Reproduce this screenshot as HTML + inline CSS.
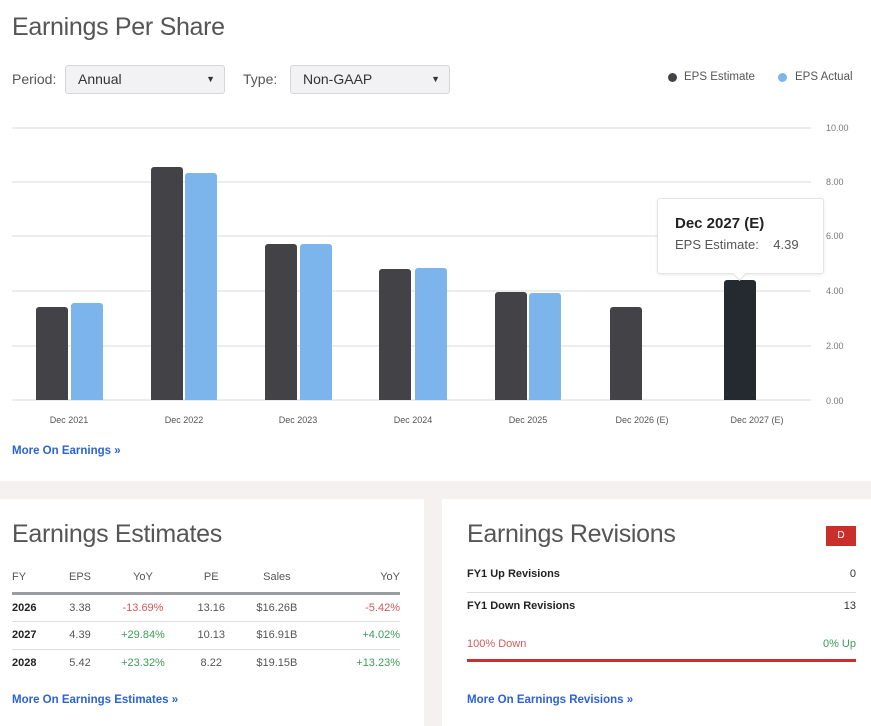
<!DOCTYPE html>
<html><head><style>
*{margin:0;padding:0;box-sizing:border-box}
body{width:871px;height:726px;background:#fff;font-family:"Liberation Sans",sans-serif;position:relative;overflow:hidden}
.a{position:absolute}
.h1{font-size:25px;color:#555;font-weight:normal;letter-spacing:-0.3px}
.sel{border:1px solid #d6d6d6;border-radius:3px;background:#f2f2f4;font-size:14px;color:#333;padding:5px 12px}
.sel span{position:absolute;right:9px;top:8px;font-size:9px}
.grid{left:12px;width:799px;height:2px;background:#ededed}
.yl{left:826px;font-size:9px;color:#777}
.bar{bottom:325px;width:32px;border-radius:3px 3px 0 0}
.e{background:#434246}.ac{background:#7cb5ec}
.xl{top:415px;font-size:9px;color:#555;width:100px;text-align:center}
.link{color:#2b62d9;font-size:11.5px;font-weight:bold}
td,th{font-size:11px;height:28px;color:#555}
th{font-weight:normal;color:#555;height:31px;border-bottom:3px solid #9a9ea3}
td{border-bottom:1px solid #ddd}
tr:last-child td{border-bottom:none}
.r{color:#d0595b}.g{color:#3d9a5a}
</style></head><body>
<div class="a h1" style="left:12px;top:13px">Earnings Per Share</div>
<div class="a" style="left:12px;top:71px;font-size:14px;color:#555">Period:</div>
<div class="a sel" style="left:65px;top:65px;width:160px;height:29px">Annual<span>▼</span></div>
<div class="a" style="left:243px;top:71px;font-size:14px;color:#555">Type:</div>
<div class="a sel" style="left:290px;top:65px;width:160px;height:29px">Non-GAAP<span>▼</span></div>
<div class="a" style="left:668px;top:73px;width:9px;height:9px;border-radius:50%;background:#434246"></div>
<div class="a" style="left:684px;top:71px;font-size:11.5px;color:#555">EPS Estimate</div>
<div class="a" style="left:778px;top:73px;width:9px;height:9px;border-radius:50%;background:#7cb5ec"></div>
<div class="a" style="left:795px;top:71px;font-size:11.5px;color:#555">EPS Actual</div>

<div class="a grid" style="top:127px"></div><div class="a yl" style="top:123px">10.00</div>
<div class="a grid" style="top:181px"></div><div class="a yl" style="top:177px">8.00</div>
<div class="a grid" style="top:235px"></div><div class="a yl" style="top:231px">6.00</div>
<div class="a grid" style="top:290px"></div><div class="a yl" style="top:286px">4.00</div>
<div class="a grid" style="top:345px"></div><div class="a yl" style="top:341px">2.00</div>
<div class="a grid" style="top:399px"></div><div class="a yl" style="top:396px">0.00</div>

<div class="a bar e" style="left:36px;top:307px;height:93px"></div>
<div class="a bar ac" style="left:71px;top:303px;height:97px"></div>
<div class="a bar e" style="left:151px;top:167px;height:233px"></div>
<div class="a bar ac" style="left:185px;top:173px;height:227px"></div>
<div class="a bar e" style="left:265px;top:244px;height:156px"></div>
<div class="a bar ac" style="left:300px;top:244px;height:156px"></div>
<div class="a bar e" style="left:379px;top:269px;height:131px"></div>
<div class="a bar ac" style="left:415px;top:268px;height:132px"></div>
<div class="a bar e" style="left:495px;top:292px;height:108px"></div>
<div class="a bar ac" style="left:529px;top:293px;height:107px"></div>
<div class="a bar e" style="left:610px;top:307px;height:93px"></div>
<div class="a bar" style="left:724px;top:280px;height:120px;background:#252a30"></div>

<div class="a xl" style="left:19px">Dec 2021</div>
<div class="a xl" style="left:134px">Dec 2022</div>
<div class="a xl" style="left:248px">Dec 2023</div>
<div class="a xl" style="left:363px">Dec 2024</div>
<div class="a xl" style="left:478px">Dec 2025</div>
<div class="a xl" style="left:592px">Dec 2026 (E)</div>
<div class="a xl" style="left:707px">Dec 2027 (E)</div>

<div class="a" style="left:657px;top:198px;width:167px;height:76px;background:#fff;border:1px solid #e3e3e3;border-radius:3px;box-shadow:0 1px 3px rgba(0,0,0,.08)"></div>
<div class="a" style="left:735px;top:270px;width:9px;height:9px;background:#fff;border-right:1px solid #e3e3e3;border-bottom:1px solid #e3e3e3;transform:rotate(45deg)"></div>
<div class="a" style="left:675px;top:215px;font-size:15px;font-weight:bold;color:#222">Dec 2027 (E)</div>
<div class="a" style="left:675px;top:237px;font-size:13px;color:#555">EPS Estimate:&nbsp;&nbsp;&nbsp; 4.39</div>

<div class="a link" style="left:12px;top:445px">More On Earnings »</div>

<div class="a" style="left:0;top:481px;width:871px;height:18px;background:#f4f1f0"></div>
<div class="a" style="left:424px;top:481px;width:18px;height:245px;background:#f4f1f0"></div>

<div class="a h1" style="left:12px;top:520px">Earnings Estimates</div>
<table class="a" style="left:12px;top:562px;width:388px;border-collapse:collapse">
<tr><th style="text-align:left">FY</th><th>EPS</th><th>YoY</th><th>PE</th><th>Sales</th><th style="text-align:right">YoY</th></tr>
<tr><td style="font-weight:bold;color:#222">2026</td><td style="text-align:center">3.38</td><td class="r" style="text-align:center">-13.69%</td><td style="text-align:center">13.16</td><td style="text-align:center">$16.26B</td><td class="r" style="text-align:right">-5.42%</td></tr>
<tr><td style="font-weight:bold;color:#222">2027</td><td style="text-align:center">4.39</td><td class="g" style="text-align:center">+29.84%</td><td style="text-align:center">10.13</td><td style="text-align:center">$16.91B</td><td class="g" style="text-align:right">+4.02%</td></tr>
<tr><td style="font-weight:bold;color:#222">2028</td><td style="text-align:center">5.42</td><td class="g" style="text-align:center">+23.32%</td><td style="text-align:center">8.22</td><td style="text-align:center">$19.15B</td><td class="g" style="text-align:right">+13.23%</td></tr>
</table>
<div class="a link" style="left:12px;top:694px">More On Earnings Estimates »</div>

<div class="a h1" style="left:467px;top:520px">Earnings Revisions</div>
<div class="a" style="left:826px;top:526px;width:30px;height:20px;background:#c9302c;color:#fff;font-size:10px;text-align:center;line-height:20px">D</div>
<div class="a" style="left:467px;top:568px;font-size:11px;font-weight:bold;color:#222">FY1 Up Revisions</div>
<div class="a" style="right:15px;top:568px;font-size:11px;color:#333">0</div>
<div class="a" style="left:467px;top:592px;width:389px;height:1px;background:#ddd"></div>
<div class="a" style="left:467px;top:600px;font-size:11px;font-weight:bold;color:#222">FY1 Down Revisions</div>
<div class="a" style="right:15px;top:600px;font-size:11px;color:#333">13</div>
<div class="a r" style="left:467px;top:638px;font-size:11px">100% Down</div>
<div class="a g" style="right:15px;top:638px;font-size:11px">0% Up</div>
<div class="a" style="left:467px;top:659px;width:389px;height:3px;background:#c9302c"></div>
<div class="a link" style="left:467px;top:694px">More On Earnings Revisions »</div>
</body></html>
